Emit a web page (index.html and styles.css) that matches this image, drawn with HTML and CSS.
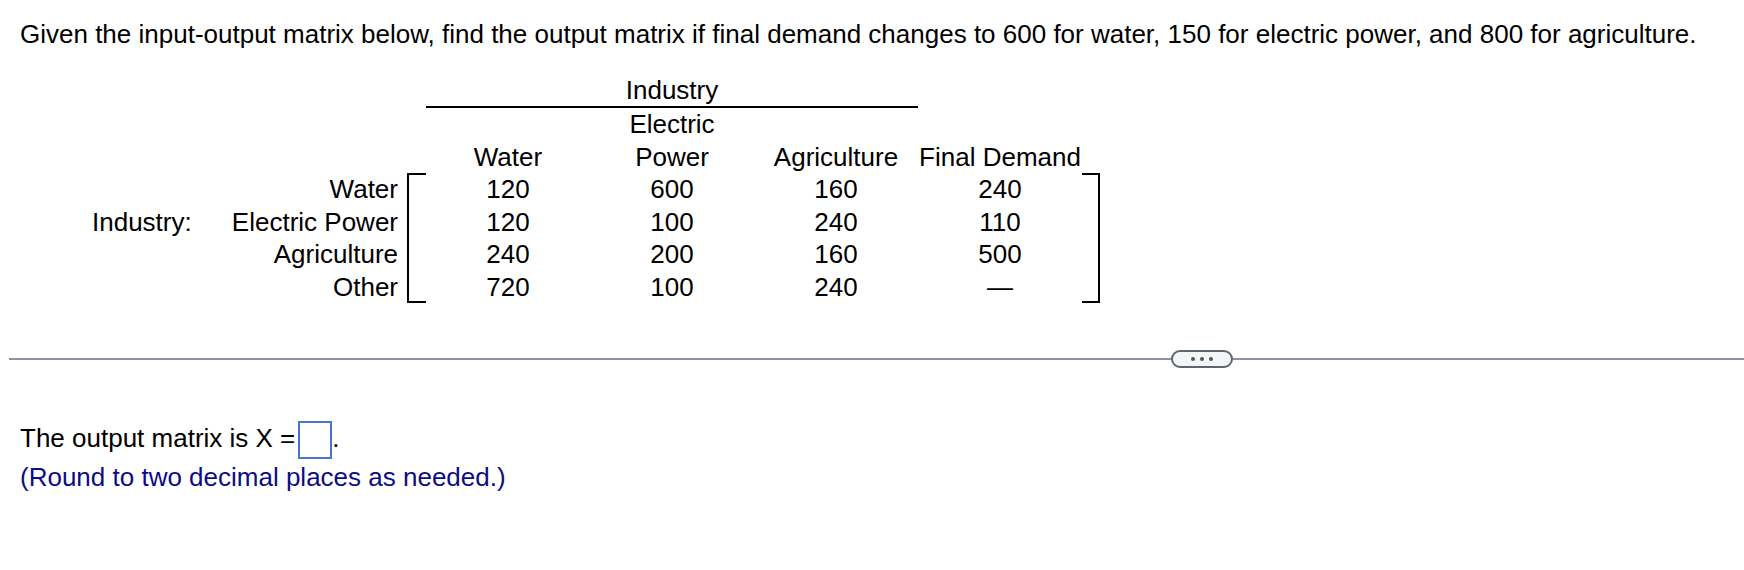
FILE: index.html
```html
<!DOCTYPE html>
<html lang="en">
<head>
<meta charset="utf-8">
<title>Input-output matrix</title>
<link rel="stylesheet" href="styles.css">
</head>
<body>
<div class="page">
  <p class="question">Given the input-output matrix below, find the output matrix if final demand changes to 600 for water, 150 for electric power, and 800 for agriculture.</p>

  <div class="matrix">
    <div class="hdr-industry">Industry</div>
    <div class="hdr-electric">Electric</div>
    <div class="hdr c1 r3">Water</div>
    <div class="hdr c2 r3">Power</div>
    <div class="hdr c3 r3">Agriculture</div>
    <div class="hdr c4 r3">Final Demand</div>

    <div class="ind-label">Industry:</div>
    <div class="row-label r4">Water</div>
    <div class="row-label r5">Electric Power</div>
    <div class="row-label r6">Agriculture</div>
    <div class="row-label r7">Other</div>

    <div class="bracket-left"></div>
    <div class="bracket-right"></div>

    <div class="cell c1 r4">120</div>
    <div class="cell c2 r4">600</div>
    <div class="cell c3 r4">160</div>
    <div class="cell c4 r4">240</div>

    <div class="cell c1 r5">120</div>
    <div class="cell c2 r5">100</div>
    <div class="cell c3 r5">240</div>
    <div class="cell c4 r5">110</div>

    <div class="cell c1 r6">240</div>
    <div class="cell c2 r6">200</div>
    <div class="cell c3 r6">160</div>
    <div class="cell c4 r6">500</div>

    <div class="cell c1 r7">720</div>
    <div class="cell c2 r7">100</div>
    <div class="cell c3 r7">240</div>
    <div class="cell c4 r7">&#8212;</div>
  </div>

  <div class="divider">
    <div class="seg seg-left"></div>
    <div class="pill"><span class="dot"></span><span class="dot"></span><span class="dot"></span></div>
    <div class="seg seg-right"></div>
  </div>

  <div class="answer">
    <p class="answer-line">The output matrix is X =<span class="answer-box"></span>.</p>
    <p class="hint">(Round to two decimal places as needed.)</p>
  </div>
</div>
</body>
</html>
```

FILE: styles.css
```css
html, body {
  margin: 0;
  padding: 0;
  background: #ffffff;
}

body {
  font-family: "Liberation Sans", Arial, Helvetica, sans-serif;
  font-size: 26px;
  color: #000000;
}

.page {
  padding-top: 18px;
}

.question {
  margin: 0 0 23px 20px;
  line-height: 32.5px;
  white-space: nowrap;
}

.matrix {
  display: grid;
  margin-left: 92px;
  grid-template-columns: 100px 206px 28px 164px 164px 164px 164px 20px;
  grid-template-rows: 34.5px repeat(6, 32.5px);
  line-height: 32.5px;
}

.hdr-industry {
  grid-column: 4 / 7;
  grid-row: 1;
  text-align: center;
  border-bottom: 2px solid #000;
}

.hdr-electric {
  grid-column: 5;
  grid-row: 2;
  text-align: center;
}

.hdr, .cell {
  text-align: center;
  white-space: nowrap;
}

.c1 { grid-column: 4; }
.c2 { grid-column: 5; }
.c3 { grid-column: 6; }
.c4 { grid-column: 7; }
.r3 { grid-row: 3; }
.r4 { grid-row: 4; }
.r5 { grid-row: 5; }
.r6 { grid-row: 6; }
.r7 { grid-row: 7; }

.ind-label {
  grid-column: 1;
  grid-row: 5;
  white-space: nowrap;
}

.row-label {
  grid-column: 2;
  text-align: right;
  white-space: nowrap;
}

.bracket-left {
  grid-column: 3;
  grid-row: 4 / 8;
  margin-left: 9px;
  border: 2px solid #000;
  border-right: none;
}

.bracket-right {
  grid-column: 8;
  grid-row: 4 / 8;
  margin-right: 2px;
  border: 2px solid #000;
  border-left: none;
}

.divider {
  display: flex;
  align-items: center;
  margin: 47px 0 0 9px;
  height: 18px;
}

.seg {
  height: 2px;
  background: #8a939f;
}

.seg-left {
  width: 1162px;
}

.seg-right {
  flex: 1;
}

.pill {
  box-sizing: border-box;
  width: 62px;
  height: 18px;
  border: 2px solid #5d6772;
  border-radius: 9px;
  background: #f4f5f7;
  display: flex;
  align-items: center;
  justify-content: center;
  gap: 5px;
}

.dot {
  width: 4px;
  height: 4px;
  border-radius: 50%;
  background: #4f5862;
}

.answer {
  margin: 50px 0 0 20px;
}

.answer-line, .hint {
  margin: 0;
  white-space: nowrap;
}

.answer-line {
  line-height: 40px;
}

.hint {
  line-height: 36px;
  color: #0c0c86;
}

.answer-box {
  display: inline-block;
  box-sizing: border-box;
  width: 34px;
  height: 38px;
  margin-left: 3px;
  border: 2px solid #4a74cf;
  vertical-align: middle;
}
```
